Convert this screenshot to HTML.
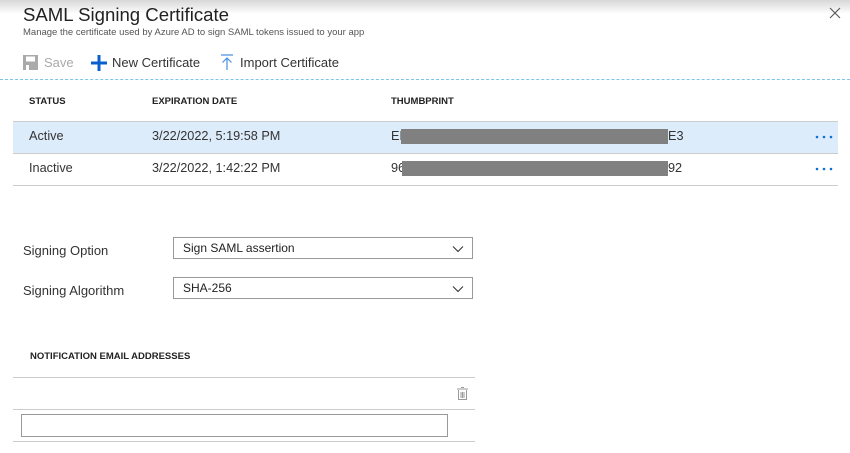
<!DOCTYPE html>
<html><head><meta charset="utf-8"><style>
body{margin:0;width:850px;height:453px;position:relative;overflow:hidden;background:#fff;font-family:"Segoe UI","Liberation Sans",sans-serif;color:#222}
.a{position:absolute;white-space:nowrap}
.top{position:absolute;left:0;top:0;width:850px;height:14px;background:linear-gradient(#d8d8d8,#fff)}
.hl{position:absolute;left:13px;width:825px;height:1px;background:#ccc}
.th{font-size:9.5px;font-weight:bold;color:#222;top:96px}
.td{font-size:12.7px;color:#333}
.red{position:absolute;background:#808080;height:15px}
.sel{position:absolute;left:173px;width:298px;height:20px;border:1px solid #999;font-size:12px}
.sel span{position:absolute;left:9px;top:3px}
.sel svg{position:absolute;right:8px;top:7px}
.lab{font-size:13px;color:#333}
</style></head><body>
<div class="top"></div>
<div class="a" style="left:23px;top:4px;font-size:18.6px;color:#222">SAML Signing Certificate</div>
<div class="a" style="left:23px;top:27px;font-size:9.5px;color:#555">Manage the certificate used by Azure AD to sign SAML tokens issued to your app</div>
<svg class="a" style="left:828px;top:6px" width="14" height="14"><path d="M2 2L12 12M12 2L2 12" stroke="#555" stroke-width="1.1"/></svg>
<svg class="a" style="left:23px;top:55px" width="16" height="16"><rect x="0" y="0" width="15" height="15" fill="#aaa"/><rect x="3" y="1.5" width="9" height="5" fill="#fff"/><rect x="3" y="10" width="3" height="5" fill="#fff"/></svg>
<div class="a" style="left:44px;top:55px;font-size:13px;color:#aaa">Save</div>
<svg class="a" style="left:91px;top:55px" width="16" height="16"><path d="M8 0V16M0 8H16" stroke="#0a5fcf" stroke-width="3"/></svg>
<div class="a" style="left:112px;top:55px;font-size:13px;color:#333">New Certificate</div>
<svg class="a" style="left:220px;top:54px" width="14" height="17"><path d="M1 1H13M7 4V16M2.5 8.5L7 4L11.5 8.5" stroke="#4a90e2" stroke-width="1.2" fill="none"/></svg>
<div class="a" style="left:240px;top:55px;font-size:13px;color:#333">Import Certificate</div>
<div class="a" style="left:0;top:79px;width:850px;border-top:1px dashed #7cc4e8"></div>
<div class="a th" style="left:29px">STATUS</div>
<div class="a th" style="left:152px">EXPIRATION DATE</div>
<div class="a th" style="left:391px">THUMBPRINT</div>
<div class="hl" style="top:121px"></div>
<div class="a" style="left:13px;top:122px;width:825px;height:31px;background:#ddecfb"></div>
<div class="hl" style="top:153px"></div>
<div class="hl" style="top:185px"></div>
<div class="a td" style="left:29px;top:129px">Active</div>
<div class="a td" style="left:152px;top:129px">3/22/2022, 5:19:58 PM</div>
<div class="a td" style="left:391px;top:129px">EE</div>
<div class="red" style="left:401px;top:129px;width:267px"></div>
<div class="a td" style="left:668px;top:129px">E3</div>
<div class="a td" style="left:29px;top:161px">Inactive</div>
<div class="a td" style="left:152px;top:161px">3/22/2022, 1:42:22 PM</div>
<div class="a td" style="left:391px;top:161px">96</div>
<div class="red" style="left:402px;top:161px;width:266px"></div>
<div class="a td" style="left:668px;top:161px">92</div>
<svg class="a" style="left:815px;top:135px" width="18" height="4"><circle cx="2" cy="2" r="1.3" fill="#0a6fd6"/><circle cx="9" cy="2" r="1.3" fill="#0a6fd6"/><circle cx="16" cy="2" r="1.3" fill="#0a6fd6"/></svg>
<svg class="a" style="left:815px;top:167px" width="18" height="4"><circle cx="2" cy="2" r="1.3" fill="#0a6fd6"/><circle cx="9" cy="2" r="1.3" fill="#0a6fd6"/><circle cx="16" cy="2" r="1.3" fill="#0a6fd6"/></svg>
<div class="a lab" style="left:23px;top:243px">Signing Option</div>
<div class="sel" style="top:237px"><span>Sign SAML assertion</span><svg width="12" height="8"><path d="M1 1.5L6 6.5L11 1.5" stroke="#333" fill="none" stroke-width="1.1"/></svg></div>
<div class="a lab" style="left:23px;top:283px">Signing Algorithm</div>
<div class="sel" style="top:277px"><span>SHA-256</span><svg width="12" height="8"><path d="M1 1.5L6 6.5L11 1.5" stroke="#333" fill="none" stroke-width="1.1"/></svg></div>
<div class="a" style="left:30px;top:351px;font-size:9.5px;font-weight:bold;color:#222">NOTIFICATION EMAIL ADDRESSES</div>
<div class="a" style="left:13px;top:377px;width:462px;height:1px;background:#ccc"></div>
<div class="a" style="left:13px;top:409px;width:462px;height:1px;background:#ccc"></div>
<div class="a" style="left:13px;top:441px;width:462px;height:1px;background:#ccc"></div>
<svg class="a" style="left:457px;top:387px" width="11" height="13"><path d="M0 2H11M4 0.5H7M1.5 3V12.5H9.5V3M4 5V11M5.5 5V11M7 5V11" stroke="#999" fill="none" stroke-width="1"/></svg>
<div class="a" style="left:21px;top:414px;width:425px;height:21px;border:1px solid #999"></div>
</body></html>
